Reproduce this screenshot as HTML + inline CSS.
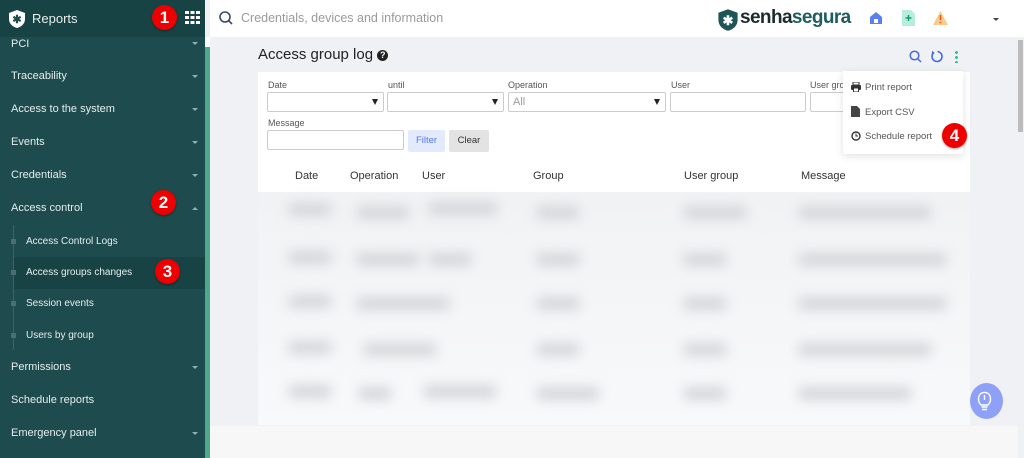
<!DOCTYPE html>
<html><head><meta charset="utf-8"><style>
*{box-sizing:border-box;margin:0;padding:0}
body{width:1024px;height:458px;overflow:hidden;font-family:"Liberation Sans",sans-serif;background:#f0f1f5;position:relative}
.sb{position:absolute;left:0;top:0;width:205px;height:458px;background:#1e4b4d;color:#e6efee}
.sbh{height:37px;background:#184344;display:flex;align-items:center;padding-left:8px}
.strip{position:absolute;left:205px;top:37px;width:5px;height:421px;background:#4ea88a}
.strip2{position:absolute;left:205px;top:37px;width:5px;height:10px;background:#fff}
.item{position:absolute;left:11px;font-size:11px;color:#e5eeee}
.car{position:absolute;left:192px;width:0;height:0;border-left:3px solid transparent;border-right:3px solid transparent;border-top:3px solid #8fb0b0}
.sub{position:absolute;left:26px;font-size:10px;color:#e5eeee}
.dot{position:absolute;left:11px;width:5px;height:5px;background:#4d6e70}
.badge{position:absolute;width:25px;height:25px;border-radius:50%;background:#e00;color:#fff;font-weight:bold;font-size:17px;text-align:center;line-height:25px;box-shadow:0 1px 2px rgba(0,0,0,.4)}
.top{position:absolute;left:210px;top:0;width:814px;height:37px;background:#fff}
.card{position:absolute;left:258px;top:72px;width:712px;height:353px;background:#fff}
.lbl{position:absolute;font-size:9px;color:#555}
.inp{position:absolute;height:20px;border:1px solid #ccc;border-radius:2px;background:#fff}
.tri{position:absolute;right:5px;top:6px;border-left:3.5px solid transparent;border-right:3.5px solid transparent;border-top:6px solid #222}
.th{position:absolute;top:170px;font-size:11px;color:#333}
.blur{position:absolute;background:#d3d5d8;filter:blur(6px);height:13px;border-radius:6px}
.menu{position:absolute;left:843px;top:71px;width:120px;height:83px;background:#fff;box-shadow:0 2px 8px rgba(0,0,0,.12)}
.mi{position:absolute;left:22px;font-size:9.5px;color:#555}
</style></head><body>
<div class="sb">
 <div class="sbh">
  <svg width="18" height="20" viewBox="0 0 18 20"><path d="M9 1L17 4V10C17 15 13 18 9 19C5 18 1 15 1 10V4Z" fill="#fff"/><text x="9" y="14" font-size="11" text-anchor="middle" fill="#1e4b4d" font-weight="bold">✱</text></svg>
  <span style="color:#e6efee;font-size:13px;margin-left:6px">Reports</span>
 </div>
 <svg style="position:absolute;left:185px;top:11px" width="15" height="13"><g fill="#fff"><rect x="0" y="0" width="4" height="3"/><rect x="5.5" y="0" width="4" height="3"/><rect x="11" y="0" width="4" height="3"/><rect x="0" y="5" width="4" height="3"/><rect x="5.5" y="5" width="4" height="3"/><rect x="11" y="5" width="4" height="3"/><rect x="0" y="10" width="4" height="3"/><rect x="5.5" y="10" width="4" height="3"/><rect x="11" y="10" width="4" height="3"/></g></svg>
 <div class="item" style="top:38px">PCI</div><div class="car" style="top:42px"></div>
 <div class="item" style="top:70px">Traceability</div><div class="car" style="top:75px"></div>
 <div class="item" style="top:103px">Access to the system</div><div class="car" style="top:108px"></div>
 <div class="item" style="top:136px">Events</div><div class="car" style="top:141px"></div>
 <div class="item" style="top:169px">Credentials</div><div class="car" style="top:174px"></div>
 <div class="item" style="top:202px">Access control</div><div style="position:absolute;left:192px;top:207px;border-left:3px solid transparent;border-right:3px solid transparent;border-bottom:3px solid #8fb0b0"></div>
 <div style="position:absolute;left:13px;top:225px;width:1px;height:125px;background:#3d6466"></div>
 <div style="position:absolute;left:14px;top:257px;width:191px;height:32px;background:#184344"></div>
 <div class="dot" style="top:239px"></div><div class="sub" style="top:236px">Access Control Logs</div>
 <div class="dot" style="top:270px"></div><div class="sub" style="top:267px">Access groups changes</div>
 <div class="dot" style="top:301px"></div><div class="sub" style="top:298px">Session events</div>
 <div class="dot" style="top:333px"></div><div class="sub" style="top:330px">Users by group</div>
 <div class="item" style="top:361px">Permissions</div><div class="car" style="top:366px"></div>
 <div class="item" style="top:394px">Schedule reports</div>
 <div class="item" style="top:427px">Emergency panel</div><div class="car" style="top:432px"></div>
</div>
<div class="strip"></div><div class="strip2"></div>
<div class="top">
 <svg style="position:absolute;left:9px;top:11px" width="14" height="14"><circle cx="6" cy="6" r="5" fill="none" stroke="#3b4a6b" stroke-width="1.6"/><path d="M10 10L13 13" stroke="#3b4a6b" stroke-width="1.6"/></svg>
 <div style="position:absolute;left:31px;top:11px;font-size:12.5px;color:#9a9a9a">Credentials, devices and information</div>
 <svg style="position:absolute;left:507px;top:8px" width="22" height="24" viewBox="0 0 18 20"><path d="M9 1L17 4V10C17 15 13 18 9 19C5 18 1 15 1 10V4Z" fill="#1e5557"/><text x="9" y="14" font-size="11" text-anchor="middle" fill="#fff" font-weight="bold">✱</text></svg>
 <div style="position:absolute;left:530px;top:7px;font-size:19px;font-weight:bold;letter-spacing:-0.6px"><span style="color:#1c2b2c">senha</span><span style="color:#1e5d5f">segura</span></div>
 <svg style="position:absolute;left:659px;top:11px" width="14" height="14"><path d="M1 6L7 1L13 6V13H1Z" fill="#5b7ff0"/><rect x="5" y="8" width="4" height="4" fill="#fff"/></svg>
 <svg style="position:absolute;left:692px;top:10px" width="13" height="16"><path d="M0 0H9L13 4V16H0Z" fill="#b6eedd"/><path d="M6.5 5V11M3.5 8H9.5" stroke="#1a9a6c" stroke-width="1.5"/></svg>
 <svg style="position:absolute;left:723px;top:11px" width="15" height="14"><path d="M7.5 0L15 14H0Z" fill="#fbc98a"/><path d="M7.5 4V9" stroke="#e05a10" stroke-width="1.6"/><circle cx="7.5" cy="11.5" r="0.9" fill="#e05a10"/></svg>
 <div style="position:absolute;left:783px;top:18px;border-left:3px solid transparent;border-right:3px solid transparent;border-top:3px solid #444"></div>
</div>
<div style="position:absolute;left:1018px;top:37px;width:6px;height:421px;background:#f0f1f5"></div>
<div style="position:absolute;left:1018px;top:40px;width:5px;height:92px;background:#bbb"></div>
<div style="position:absolute;left:210px;top:426px;width:808px;height:32px;background:#f7f7f7"></div>
<div style="position:absolute;left:258px;top:46px;font-size:15px;color:#222">Access group log <span style="display:inline-block;width:11px;height:11px;border-radius:50%;background:#222;color:#fff;font-size:9px;text-align:center;line-height:11px;font-weight:bold;vertical-align:1px">?</span></div>
<svg style="position:absolute;left:909px;top:50px" width="13" height="13"><circle cx="5.5" cy="5.5" r="4.3" fill="none" stroke="#4466ee" stroke-width="1.5"/><path d="M9 9L12 12" stroke="#4466ee" stroke-width="1.5"/></svg>
<svg style="position:absolute;left:931px;top:50px" width="13" height="13"><path d="M3 2.5A5 5 0 1 0 6.5 1.5" fill="none" stroke="#4466ee" stroke-width="1.6"/><path d="M1.5 0.5L3.5 3.5L0.5 4.5" fill="#4466ee"/></svg>
<div style="position:absolute;left:955px;top:50px;width:3px;height:13px;background:radial-gradient(circle,#2dc08d 1.3px,transparent 1.6px) 0 0/3px 5px"></div>
<div class="card">
 <div class="lbl" style="left:10px;top:8px">Date</div>
 <div class="inp" style="left:9px;top:20px;width:117px"><div class="tri"></div></div>
 <div class="lbl" style="left:130px;top:8px">until</div>
 <div class="inp" style="left:129px;top:20px;width:117px"><div class="tri"></div></div>
 <div class="lbl" style="left:250px;top:8px">Operation</div>
 <div class="inp" style="left:250px;top:20px;width:158px;font-size:11px;color:#999;padding:3px 4px">All<div class="tri"></div></div>
 <div class="lbl" style="left:413px;top:8px">User</div>
 <div class="inp" style="left:412px;top:20px;width:136px"></div>
 <div class="lbl" style="left:552px;top:8px">User gro</div>
 <div class="inp" style="left:552px;top:20px;width:40px"></div>
 <div class="lbl" style="left:10px;top:46px">Message</div>
 <div class="inp" style="left:9px;top:58px;width:137px"></div>
 <div style="position:absolute;left:150px;top:58px;width:37px;height:22px;background:#e3eafc;color:#5a77e8;font-size:9.5px;text-align:center;line-height:22px;border-radius:2px">Filter</div>
 <div style="position:absolute;left:191px;top:58px;width:40px;height:22px;background:#e3e3e3;color:#333;font-size:9.5px;text-align:center;line-height:22px;border-radius:2px">Clear</div>
 <div style="position:absolute;left:0;top:120px;width:712px;height:233px;background:linear-gradient(#f1f2f4,#f8f9fb)"></div>
</div>
<div class="th" style="left:295px">Date</div><div class="th" style="left:350px">Operation</div><div class="th" style="left:422px">User</div><div class="th" style="left:533px">Group</div><div class="th" style="left:684px">User group</div><div class="th" style="left:801px">Message</div>
<div class="blur" style="left:288px;top:203px;width:44px"></div><div class="blur" style="left:356px;top:206px;width:54px"></div><div class="blur" style="left:428px;top:202px;width:70px"></div><div class="blur" style="left:536px;top:206px;width:44px"></div><div class="blur" style="left:683px;top:206px;width:64px"></div><div class="blur" style="left:798px;top:206px;width:134px"></div>
<div class="blur" style="left:288px;top:251px;width:44px"></div><div class="blur" style="left:356px;top:253px;width:64px"></div><div class="blur" style="left:428px;top:253px;width:44px"></div><div class="blur" style="left:536px;top:253px;width:44px"></div><div class="blur" style="left:683px;top:253px;width:44px"></div><div class="blur" style="left:798px;top:253px;width:149px"></div>
<div class="blur" style="left:288px;top:295px;width:44px"></div><div class="blur" style="left:356px;top:297px;width:94px"></div><div class="blur" style="left:536px;top:297px;width:44px"></div><div class="blur" style="left:683px;top:297px;width:44px"></div><div class="blur" style="left:798px;top:297px;width:149px"></div>
<div class="blur" style="left:288px;top:341px;width:44px"></div><div class="blur" style="left:363px;top:343px;width:74px"></div><div class="blur" style="left:536px;top:343px;width:44px"></div><div class="blur" style="left:683px;top:343px;width:44px"></div><div class="blur" style="left:798px;top:343px;width:134px"></div>
<div class="blur" style="left:288px;top:385px;width:44px"></div><div class="blur" style="left:358px;top:387px;width:34px"></div><div class="blur" style="left:423px;top:385px;width:74px"></div><div class="blur" style="left:536px;top:387px;width:64px"></div><div class="blur" style="left:683px;top:387px;width:44px"></div><div class="blur" style="left:798px;top:387px;width:114px"></div>
<div class="menu">
 <svg style="position:absolute;left:8px;top:11px" width="10" height="10"><rect x="2" y="0" width="6" height="3" fill="none" stroke="#333"/><rect x="0" y="3" width="10" height="5" rx="1" fill="#333"/><rect x="2.5" y="6" width="5" height="4" fill="#fff" stroke="#333"/></svg>
 <div class="mi" style="top:11px">Print report</div>
 <svg style="position:absolute;left:8px;top:35px" width="9" height="11"><path d="M0 0H6L9 3V11H0Z" fill="#444"/></svg>
 <div class="mi" style="top:36px">Export CSV</div>
 <svg style="position:absolute;left:8px;top:60px" width="10" height="10"><circle cx="5" cy="5" r="4" fill="none" stroke="#333" stroke-width="1.4"/><path d="M5 2.5V5H7" stroke="#333" fill="none"/></svg>
 <div class="mi" style="top:60px">Schedule report</div>
</div>
<div class="badge" style="left:152px;top:5px">1</div>
<div class="badge" style="left:151px;top:190px">2</div>
<div class="badge" style="left:155px;top:259px">3</div>
<div class="badge" style="left:942px;top:123px">4</div>
<div style="position:absolute;left:970px;top:383px;width:33px;height:36px;border-radius:50%;background:#8fa0f7"></div>
<svg style="position:absolute;left:976px;top:390px" width="18" height="24"><path d="M5 15C2 12 2 9 3 6A6 6 0 0 1 14 6C15 9 15 12 12 15Z" fill="none" stroke="#fff" stroke-width="1.4"/><path d="M5.5 17H11.5M6 19.5H11" stroke="#fff" stroke-width="1.4"/><path d="M8.5 5V10" stroke="#fff" stroke-width="1.4"/></svg>
</body></html>
